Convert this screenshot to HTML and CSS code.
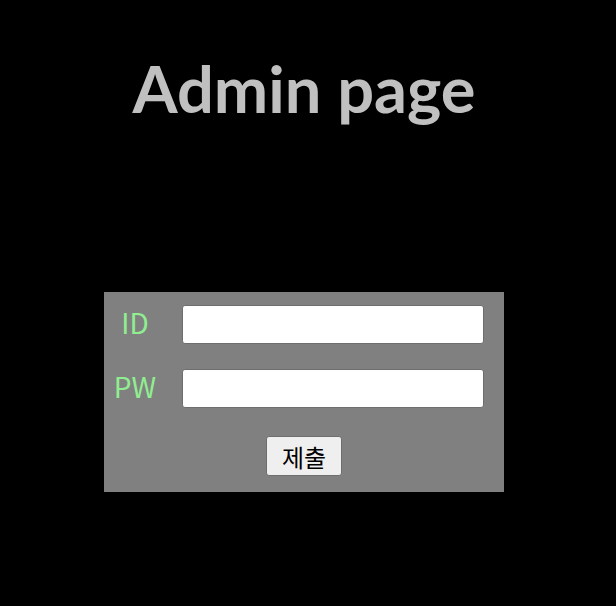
FILE: index.html
```html
<!DOCTYPE html>
<html lang="ko">
<head>
<meta charset="utf-8">
<title>Admin page</title>
<link rel="stylesheet" href="styles.css">
</head>
<body>
<div class="page">
  <h1 class="title">Admin page</h1>
  <form class="login">
    <div class="row">
      <label class="label" for="id">ID</label>
      <input class="field" id="id" type="text">
    </div>
    <div class="row">
      <label class="label" for="pw">PW</label>
      <input class="field" id="pw" type="password">
    </div>
    <div class="actions">
      <button class="submit" type="button">제출</button>
    </div>
  </form>
</div>
</body>
</html>
```
FILE: styles.css
```css
html, body {
  margin: 0;
  padding: 0;
  background: #000;
  height: 100%;
}
.page {
  width: 608px;
  display: flex;
  flex-direction: column;
  align-items: center;
  font-family: "Noto Sans CJK KR", sans-serif;
}
.title {
  margin: 48px 0 0;
  font-family: Lato, "Noto Sans CJK KR", sans-serif;
  font-size: 65px;
  font-weight: 700;
  color: #c0c0c0;
  line-height: 80px;
}
.login {
  margin-top: 164px;
  width: 400px;
  height: 200px;
  box-sizing: border-box;
  background: #808080;
  padding: 13px 20px 0 0;
  display: flex;
  flex-direction: column;
}
.row {
  display: flex;
  align-items: center;
  height: 39px;
  margin-bottom: 25px;
}
.label {
  width: 62px;
  margin-right: 16px;
  margin-top: -5px;
  text-align: center;
  color: #90ee90;
  font-size: 28px;
  line-height: 39px;
}
.field {
  width: 302px;
  height: 39px;
  box-sizing: border-box;
  border: 1px solid #6e6e6e;
  border-radius: 3px;
  background: #fff;
  margin: 0;
}
.actions {
  display: flex;
  justify-content: center;
  padding-left: 20px;
  margin-top: 3px;
}
.submit {
  width: 76px;
  height: 40px;
  font-family: "Noto Sans CJK KR", sans-serif;
  font-size: 24px;
  color: #000;
  background: #efefef;
  border: 1px solid #6e6e6e;
  border-radius: 3px;
  padding: 0;
}
```
